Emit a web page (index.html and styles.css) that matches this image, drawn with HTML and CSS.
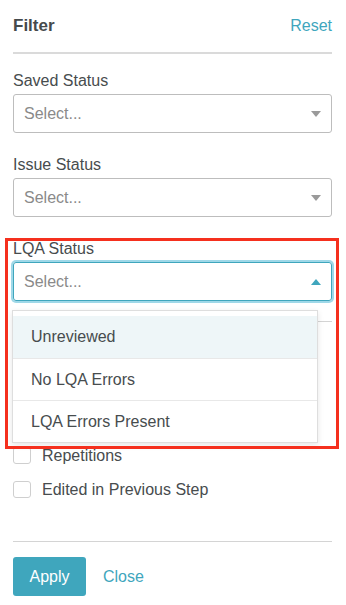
FILE: index.html
```html
<!DOCTYPE html>
<html lang="en">
<head>
  <meta charset="UTF-8" />
  <meta name="viewport" content="width=device-width, initial-scale=1.0"/>
  <title>Filter</title>
  <link rel="stylesheet" href="styles.css">
</head>
<body>
  <div id="panel">
    <div class="header">
      <h2>Filter</h2>
      <a class="link" href="#">Reset</a>
    </div>

    <div class="field">
      <label>Saved Status</label>
      <div class="select">
        <span>Select...</span>
        <i class="arrow"></i>
      </div>
    </div>

    <div class="field">
      <label>Issue Status</label>
      <div class="select">
        <span>Select...</span>
        <i class="arrow"></i>
      </div>
    </div>

    <div class="field lqa">
      <label>LQA Status</label>
      <div class="select open">
        <span>Select...</span>
        <i class="arrow up"></i>
        <ul class="menu">
          <li class="active">Unreviewed</li>
          <li>No LQA Errors</li>
          <li>LQA Errors Present</li>
        </ul>
      </div>
      <div class="highlight"></div>
    </div>

    <div class="checks">
      <div class="check"><span class="box"></span>Repetitions</div>
      <div class="check"><span class="box"></span>Edited in Previous Step</div>
    </div>

    <div class="footer">
      <button class="apply">Apply</button>
      <a class="link" href="#">Close</a>
    </div>
  </div>
</body>
</html>
```

FILE: styles.css
```css
* {
  margin: 0;
  padding: 0;
  box-sizing: border-box;
  font-family: "Liberation Sans", Arial, Helvetica, sans-serif;
}

body {
  background: #fff;
  color: #474c4e;
}

#panel {
  padding: 0 14px 0 13px;
  font-size: 16px;
}

.link {
  color: #3fa6bd;
  text-decoration: none;
  font-size: 16px;
}

.header {
  display: flex;
  justify-content: space-between;
  align-items: baseline;
  padding: 16px 0 16px;
  border-bottom: 2px solid #dadada;
}

.header h2 {
  font-size: 17px;
  line-height: 20px;
  font-weight: bold;
  color: #454a4c;
}

.field {
  margin-top: 17px;
  position: relative;
}

.field + .field {
  margin-top: 22px;
}

.field label {
  display: block;
  line-height: 20px;
  margin-bottom: 3px;
  color: #474c4e;
}

.select {
  position: relative;
  height: 39px;
  border: 1px solid #bdbdbd;
  border-radius: 3px;
  display: flex;
  align-items: center;
  justify-content: space-between;
  padding: 0 10px 0 10px;
  color: #8a8a8a;
}

.arrow {
  width: 0;
  height: 0;
  border-left: 5.5px solid transparent;
  border-right: 5.5px solid transparent;
  border-top: 6px solid #9a9a9a;
}

.arrow.up {
  border-top: none;
  border-bottom: 6px solid #3fa6bd;
}

.select.open {
  border-color: #3fa6bd;
  box-shadow: 0 0 0 2px #9fd8e8;
}

.menu {
  position: absolute;
  top: 47px;
  left: -2px;
  width: 306px;
  list-style: none;
  background: #fff;
  border: 1px solid #dedede;
  box-shadow: 0 2px 6px rgba(0, 0, 0, 0.1);
  padding-top: 5px;
  z-index: 2;
}

.menu li {
  height: 42px;
  line-height: 42px;
  padding-left: 18px;
  color: #474c4e;
  border-top: 1px solid #e8e8e8;
}

.menu li:first-child {
  border-top: none;
}

.menu li.active {
  background: #eef6f8;
}

.highlight {
  position: absolute;
  top: -1px;
  left: -8px;
  right: -7px;
  height: 211px;
  border: 3px solid #f5301e;
  z-index: 3;
  pointer-events: none;
}

.checks {
  margin-top: 20px;
  border-top: 1px solid #d4d4d4;
  padding-top: 125px;
  padding-bottom: 26px;
}

.check {
  display: flex;
  align-items: center;
  gap: 11px;
  height: 17px;
  margin-bottom: 17px;
  color: #474c4e;
}

.box {
  width: 18px;
  height: 17px;
  border: 1px solid #cfcfcf;
  border-radius: 3px;
  background: #fff;
}

.footer {
  border-top: 1px solid #d4d4d4;
  padding-top: 15px;
  display: flex;
  align-items: center;
  gap: 17px;
}

.apply {
  width: 73px;
  height: 39px;
  background: #3fa6bd;
  color: #fff;
  border: none;
  border-radius: 3px;
  font-size: 16px;
}
```
